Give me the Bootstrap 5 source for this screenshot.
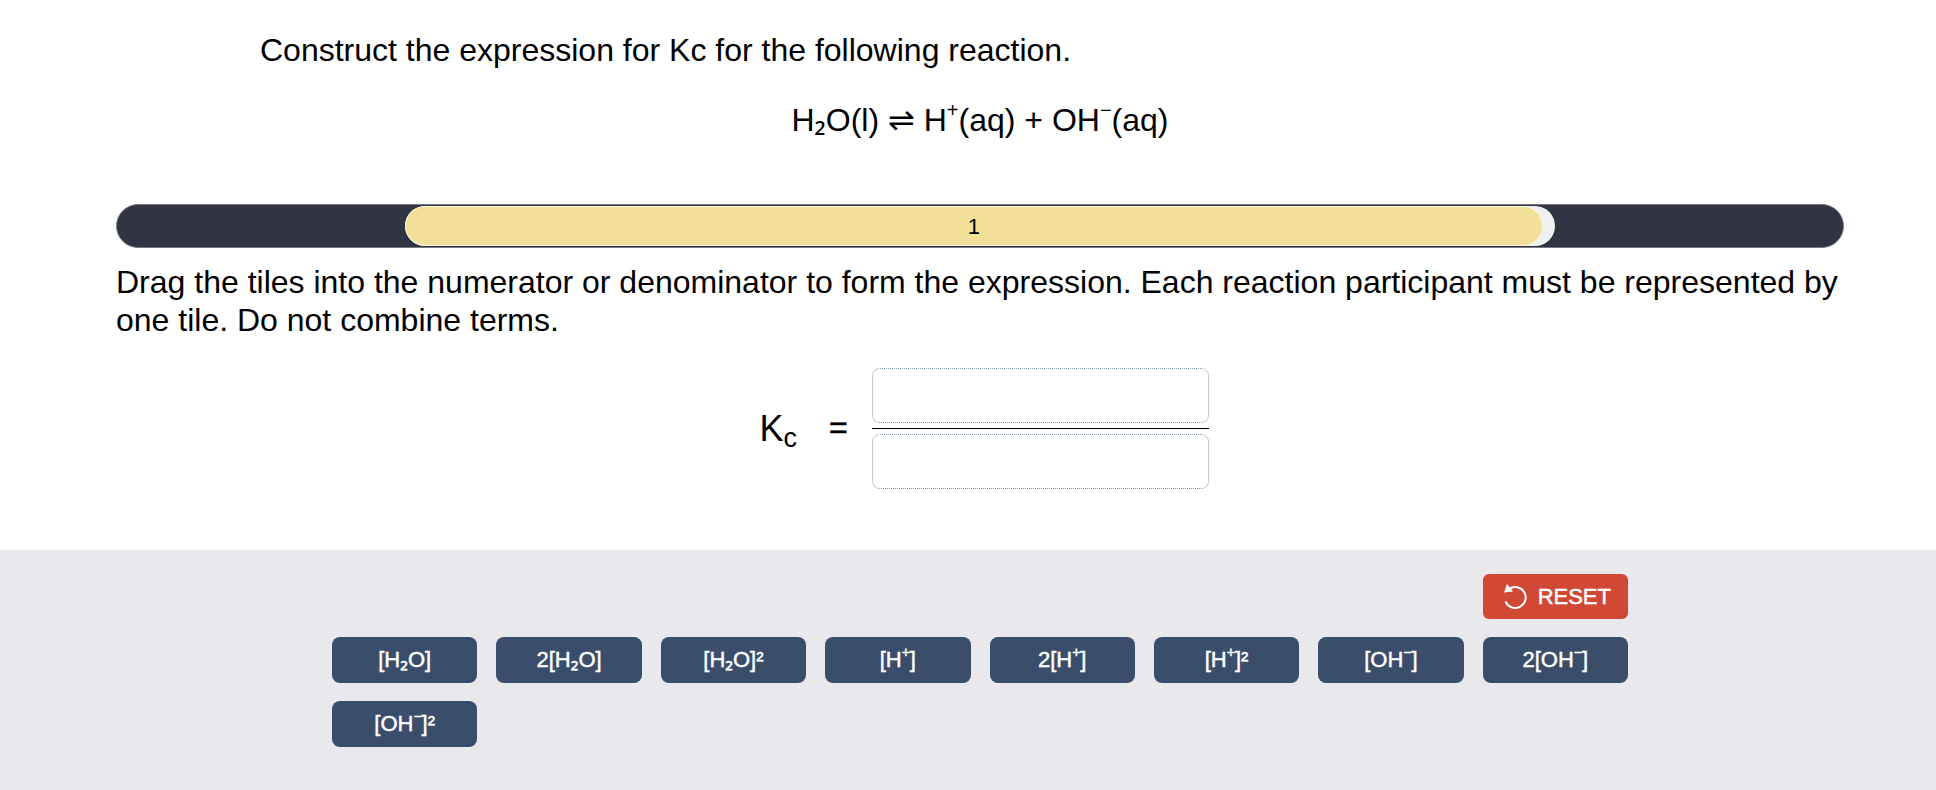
<!DOCTYPE html>
<html lang="en">
<head>
<meta charset="utf-8">
<meta name="viewport" content="width=device-width, initial-scale=1">
<title>Equilibrium expression</title>
<link href="https://cdn.jsdelivr.net/npm/bootstrap@5.3.0/dist/css/bootstrap.min.css" rel="stylesheet">
<style>
  body { font-family: "Liberation Sans", "Noto Sans", "DejaVu Sans", sans-serif; color: #000; }
  .page-gutter { padding-left: 116px; padding-right: 92px; }
  .prompt { font-size: 32px; line-height: 38px; }
  .question { padding-top: 31px; }
  .equation { margin-top: 32px; margin-bottom: 65px; }
  .idx { font-family: "Noto Sans", sans-serif; line-height: 1; }
  .ion { font-size: 14px; top: 0; vertical-align: 10px; line-height: 0; }
  .equation .ion { font-size: 20px; vertical-align: 14px; }
  .step-track { height: 44px; background: #303443; border: 1px solid #77797c; border-radius: 22px; padding: 1px 0; }
  .step-shell { background: #f0f0f0; border-radius: 20px; padding-right: 12px; }
  .step-fill { height: 100%; background: #f2df98; border: 1px solid #fbf6e0; border-radius: 20px; font-size: 22px; }
  .instructions { margin-top: 15px; }
  .workspace { margin-top: 29px; padding-left: 8px; padding-bottom: 61px; }
  .kc-label { font-size: 36px; line-height: 48px; }
  .kc-label sub { font-size: 27px; bottom: -6px; }
  .kc-equals { font-size: 32px; line-height: 48px; margin-left: 32px; margin-right: 24px; margin-top: -4px; -webkit-text-stroke: thin; }
  .fraction { width: 337px; }
  .drop-zone { height: 55px; border: 1px dotted #8096ac; border-radius: 8px; }
  .fraction-bar { height: 1px; background: #000; margin: 5px 0; }
  .tray { background: #e9e8ed; padding-top: 24px; padding-bottom: 42px; flex-grow: 1; }
  .tile-grid { display: grid; grid-template-columns: repeat(8, 1fr); gap: 18px 19px; }
  .tile { --bs-btn-color: #fff; --bs-btn-bg: #3a4d6b; --bs-btn-hover-color: #fff; --bs-btn-hover-bg: #304260; height: 46px; border: 0; border-radius: 8px; font-size: 22px; line-height: 30px; padding: 0; white-space: nowrap; -webkit-text-stroke: thin; }
  .tile-reset { --bs-btn-bg: #d14934; --bs-btn-hover-bg: #b93d2a; grid-column: 8; height: 45px; border-radius: 6px; gap: 10px; padding-left: 4px; }
</style>
<script src="https://cdn.jsdelivr.net/npm/bootstrap@5.3.0/dist/js/bootstrap.bundle.min.js"></script>
</head>
<body class="d-flex flex-column min-vh-100">
<main class="page-gutter">
  <div class="row g-0 question prompt">
    <p class="col-10 offset-1 mb-0">Construct the expression for Kc for the following reaction.</p>
  </div>
  <p class="equation prompt text-center">H<span class="idx">₂</span>O(l) ⇌ H<sup class="ion">+</sup>(aq) + OH<sup class="ion">−</sup>(aq)</p>
  <div class="step-track">
    <div class="row g-0 h-100">
      <div class="col-8 offset-2 step-shell h-100">
        <div class="step-fill d-flex align-items-center justify-content-center">1</div>
      </div>
    </div>
  </div>
  <p class="instructions prompt mb-0">Drag the tiles into the numerator or denominator to form the expression. Each reaction participant must be represented by one tile. Do not combine terms.</p>
  <div class="workspace d-flex justify-content-center align-items-center">
    <div class="kc-label">K<sub>c</sub></div>
    <div class="kc-equals">=</div>
    <div class="fraction">
      <div class="drop-zone" role="group" aria-label="Numerator"></div>
      <div class="fraction-bar"></div>
      <div class="drop-zone" role="group" aria-label="Denominator"></div>
    </div>
  </div>
</main>
<section class="tray page-gutter">
  <div class="col-9 mx-auto tile-grid">
    <button type="button" class="btn tile tile-reset d-flex align-items-center justify-content-center">
      <svg width="24" height="26" viewBox="0 0 24 26" fill="none" aria-hidden="true"><path d="M5 5A10.500 10.500 0 1 1 1.500 17.500" stroke="#fff" stroke-width="2"/><path d="M3 0 0 8.500l9-1z" fill="#fff"/></svg>
      <span>RESET</span>
    </button>
    <button type="button" class="btn tile" draggable="true">[H<span class="idx">₂</span>O]</button>
    <button type="button" class="btn tile" draggable="true">2[H<span class="idx">₂</span>O]</button>
    <button type="button" class="btn tile" draggable="true">[H<span class="idx">₂</span>O]²</button>
    <button type="button" class="btn tile" draggable="true">[H<sup class="ion">+</sup>]</button>
    <button type="button" class="btn tile" draggable="true">2[H<sup class="ion">+</sup>]</button>
    <button type="button" class="btn tile" draggable="true">[H<sup class="ion">+</sup>]²</button>
    <button type="button" class="btn tile" draggable="true">[OH<sup class="ion">−</sup>]</button>
    <button type="button" class="btn tile" draggable="true">2[OH<sup class="ion">−</sup>]</button>
    <button type="button" class="btn tile" draggable="true">[OH<sup class="ion">−</sup>]²</button>
  </div>
</section>
</body>
</html>
